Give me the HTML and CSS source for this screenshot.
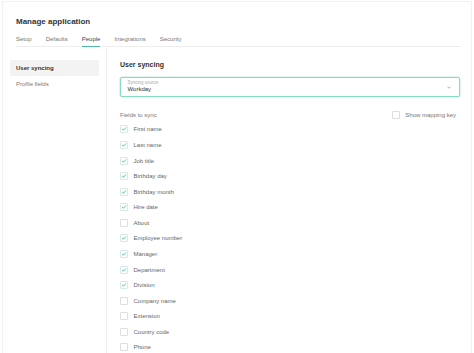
FILE: index.html
```html
<!DOCTYPE html>
<html>
<head>
<meta charset="utf-8">
<link rel="stylesheet" href="styles.css">
</head>
<body>
<div class="card">
  <h1 class="title">Manage application</h1>
  <nav class="tabs">
    <span class="tab">Setup</span>
    <span class="tab">Defaults</span>
    <span class="tab active">People</span>
    <span class="tab">Integrations</span>
    <span class="tab">Security</span>
  </nav>
  <div class="body">
    <aside class="sidebar">
      <div class="side-item active">User syncing</div>
      <div class="side-item">Profile fields</div>
    </aside>
    <main class="main">
      <h2 class="heading">User syncing</h2>
      <div class="select">
        <div class="select-text">
          <div class="select-label">Syncing source</div>
          <div class="select-value">Workday</div>
        </div>
        <svg class="chevron" width="4" height="3" viewBox="0 0 4 3"><path d="M0.5 0.8 L2 2.2 L3.5 0.8" fill="none" stroke="#8a8a8a" stroke-width="0.7"/></svg>
      </div>
      <div class="fields-head">
        <span class="fields-label">Fields to sync</span>
        <label class="check-row mapping">
          <span class="box"></span>
          <span>Show mapping key</span>
        </label>
      </div>
      <ul class="list">
        <li class="check-row"><span class="box checked"><svg viewBox="0 0 8 8"><path d="M1.8 4.2 L3.3 5.6 L6.2 2.4" /></svg></span>First name</li>
        <li class="check-row"><span class="box checked"><svg viewBox="0 0 8 8"><path d="M1.8 4.2 L3.3 5.6 L6.2 2.4" /></svg></span>Last name</li>
        <li class="check-row"><span class="box checked"><svg viewBox="0 0 8 8"><path d="M1.8 4.2 L3.3 5.6 L6.2 2.4" /></svg></span>Job title</li>
        <li class="check-row"><span class="box checked"><svg viewBox="0 0 8 8"><path d="M1.8 4.2 L3.3 5.6 L6.2 2.4" /></svg></span>Birthday day</li>
        <li class="check-row"><span class="box checked"><svg viewBox="0 0 8 8"><path d="M1.8 4.2 L3.3 5.6 L6.2 2.4" /></svg></span>Birthday month</li>
        <li class="check-row"><span class="box checked"><svg viewBox="0 0 8 8"><path d="M1.8 4.2 L3.3 5.6 L6.2 2.4" /></svg></span>Hire date</li>
        <li class="check-row"><span class="box"></span>About</li>
        <li class="check-row"><span class="box checked"><svg viewBox="0 0 8 8"><path d="M1.8 4.2 L3.3 5.6 L6.2 2.4" /></svg></span>Employee number</li>
        <li class="check-row"><span class="box checked"><svg viewBox="0 0 8 8"><path d="M1.8 4.2 L3.3 5.6 L6.2 2.4" /></svg></span>Manager</li>
        <li class="check-row"><span class="box checked"><svg viewBox="0 0 8 8"><path d="M1.8 4.2 L3.3 5.6 L6.2 2.4" /></svg></span>Department</li>
        <li class="check-row"><span class="box checked"><svg viewBox="0 0 8 8"><path d="M1.8 4.2 L3.3 5.6 L6.2 2.4" /></svg></span>Division</li>
        <li class="check-row"><span class="box"></span>Company name</li>
        <li class="check-row"><span class="box"></span>Extension</li>
        <li class="check-row"><span class="box"></span>Country code</li>
        <li class="check-row"><span class="box"></span>Phone</li>
      </ul>
    </main>
  </div>
</div>
</body>
</html>
```

FILE: styles.css
```css
* { box-sizing: border-box; }
html, body { margin: 0; padding: 0; background: #fff; }
body {
  font-family: "Liberation Sans", Arial, sans-serif;
  color: #555;
  height: 353px;
  overflow: hidden;
}
.card {
  margin: 1px 2px 0 2px;
  border: 1px solid #f1f1f1;
  border-bottom: none;
  height: 352px;
  padding-top: 15px;
}
.title {
  margin: 0 0 0 13px;
  font-size: 8px;
  line-height: 10px;
  font-weight: bold;
  color: #333;
}
.tabs {
  display: flex;
  gap: 14px;
  margin: 7.5px 10px 0 13px;
  border-bottom: 1px solid #eeeeee;
}
.tab {
  font-size: 6px;
  line-height: 8px;
  color: #777;
  padding-bottom: 3.5px;
  border-bottom: 1.5px solid transparent;
  margin-bottom: -1px;
}
.tab.active {
  color: #444;
  border-bottom-color: #4fbfa5;
}
.body {
  display: flex;
  height: 310px;
}
.sidebar {
  width: 104px;
  flex: none;
  border-right: 1px solid #efefef;
  padding: 12.5px 7px 0 7px;
}
.side-item {
  height: 16px;
  line-height: 16px;
  font-size: 6px;
  padding-left: 6px;
  color: #777;
}
.side-item.active {
  background: #f3f3f3;
  font-weight: bold;
  color: #333;
}
.main {
  flex: 1;
  padding: 13px 11px 0 13px;
}
.heading {
  margin: 0;
  font-size: 7px;
  line-height: 9px;
  font-weight: bold;
  color: #333;
}
.select {
  margin-top: 7.5px;
  height: 20px;
  border: 1px solid #8ad8c5;
  border-radius: 2px;
  box-shadow: 0 0 0 0.5px #c5ece2;
  display: flex;
  align-items: center;
  justify-content: space-between;
  padding: 0 8px 0 6.5px;
}
.select-text { display: flex; flex-direction: column; margin-top: -0.5px; }
.select-label {
  font-size: 4.5px;
  line-height: 6px;
  color: #aaa;
}
.select-value {
  font-size: 6px;
  line-height: 7px;
  color: #333;
}
.chevron { margin-top: 1px; }
.fields-head {
  margin-top: 14px;
  display: flex;
  justify-content: space-between;
  align-items: center;
  height: 9px;
  padding-right: 4px;
}
.fields-label {
  font-size: 6px;
  color: #777;
}
.list {
  list-style: none;
  margin: 2.2px 0 0 0;
  padding: 0;
}
.check-row {
  display: flex;
  align-items: center;
  gap: 5.5px;
  font-size: 6px;
  color: #666;
}
.list .check-row { height: 15.57px; }
.mapping { color: #777; }
.box {
  width: 8px;
  height: 8px;
  border: 1px solid #dedede;
  border-radius: 1px;
  flex: none;
  display: flex;
  background: #fff;
}
.box.checked { border-color: #d6ebe5; }
.box svg {
  width: 6px;
  height: 6px;
  margin: auto;
}
.box svg path {
  fill: none;
  stroke: #3bb294;
  stroke-width: 1.1;
  stroke-linecap: round;
  stroke-linejoin: round;
}
```
